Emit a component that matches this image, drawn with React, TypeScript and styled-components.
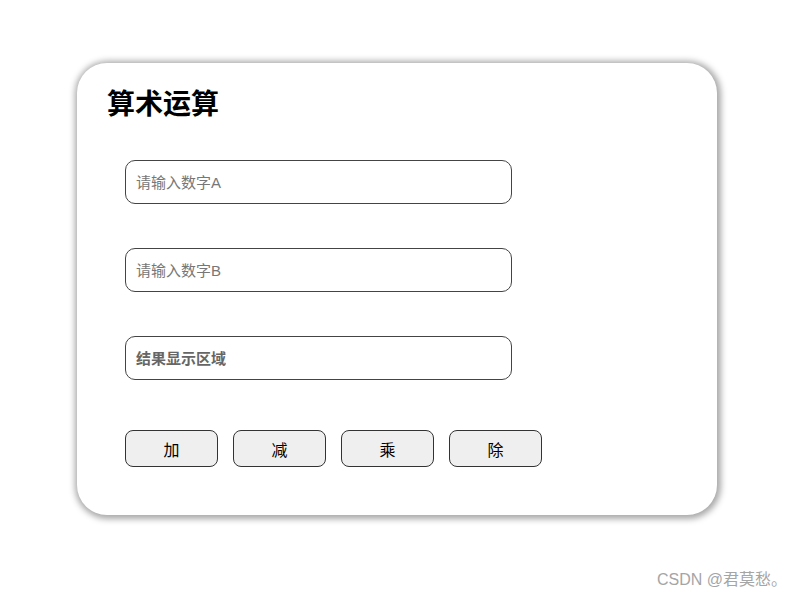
import React from "react";
import styled, { createGlobalStyle } from "styled-components";

const Global = createGlobalStyle`
  html, body { margin: 0; padding: 0; background: #fff; }
  body { font-family: "Liberation Sans", Arial, "Noto Sans CJK SC", sans-serif; }
`;

const Page = styled.div`
  position: relative;
  width: 797px;
  height: 598px;
  padding: 63px 0 0 77px;
  box-sizing: border-box;
`;

const Card = styled.div`
  width: 640px;
  height: 452px;
  box-sizing: border-box;
  background: #fff;
  border-radius: 30px;
  box-shadow: 1px 1px 6px 3px #a8a8a8;
  padding: 22px 0 0 30px;
  display: flex;
  flex-direction: column;
`;

const Title = styled.h2`
  margin: 0;
  font-size: 28px;
  line-height: 34px;
  font-weight: bold;
  color: #000;
  font-family: "Noto Sans CJK SC", sans-serif;
`;

const Fields = styled.div`
  display: flex;
  flex-direction: column;
  gap: 44px;
  margin: 41px 0 0 18px;
`;

const Field = styled.input<{ $bold?: boolean }>`
  width: 387px;
  height: 44px;
  box-sizing: border-box;
  border: 1px solid #444;
  border-radius: 10px;
  padding: 0 10px;
  font-size: 15px;
  font-family: "Liberation Sans", Arial, "Noto Sans CJK SC", sans-serif;
  font-weight: ${(p) => (p.$bold ? "bold" : "normal")};
  color: #333;
  outline: none;
  &::placeholder {
    color: ${(p) => (p.$bold ? "#666" : "#777")};
    font-weight: ${(p) => (p.$bold ? "bold" : "normal")};
  }
`;

const Buttons = styled.div`
  display: flex;
  gap: 15px;
  margin: 50px 0 0 18px;
`;

const Btn = styled.button`
  width: 93px;
  height: 37px;
  box-sizing: border-box;
  background: #efefef;
  border: 1px solid #333;
  border-radius: 8px;
  font-size: 16px;
  font-family: "Noto Sans CJK SC", sans-serif;
  color: #000;
  padding: 0;
`;

const Watermark = styled.div`
  position: absolute;
  right: 10px;
  bottom: 8px;
  font-size: 16px;
  color: #a5a5a5;
  font-family: "Liberation Sans", Arial, "Noto Sans CJK SC", sans-serif;
`;

export default function App() {
  return (
    <Page>
      <Global />
      <Card>
        <Title>算术运算</Title>
        <Fields>
          <Field placeholder="请输入数字A" />
          <Field placeholder="请输入数字B" />
          <Field $bold placeholder="结果显示区域" readOnly />
        </Fields>
        <Buttons>
          <Btn>加</Btn>
          <Btn>减</Btn>
          <Btn>乘</Btn>
          <Btn>除</Btn>
        </Buttons>
      </Card>
      <Watermark>CSDN @君莫愁。</Watermark>
    </Page>
  );
}
